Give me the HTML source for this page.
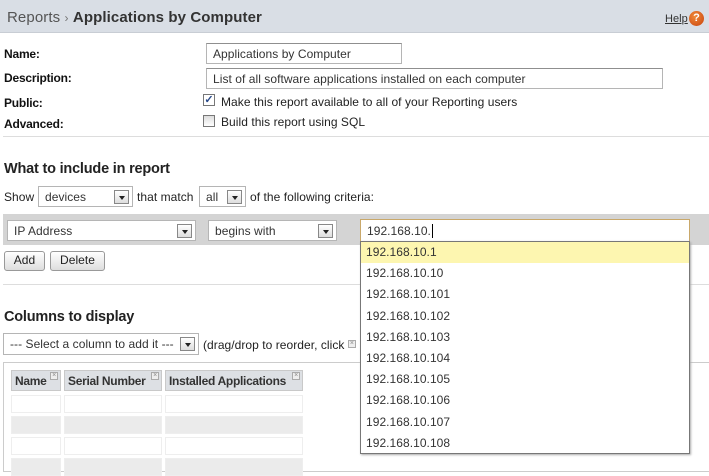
<!DOCTYPE html>
<html><head><meta charset="utf-8"><style>
*{margin:0;padding:0;box-sizing:border-box}
body{width:709px;height:462px;overflow:hidden;background:#fff;font-family:"Liberation Sans",sans-serif;font-size:12px;letter-spacing:0.05px;color:#222;position:relative}
.a{position:absolute;white-space:nowrap}
.hdr{left:0;top:0;width:709px;height:33px;background:#d9dee5;border-bottom:1px solid #c8cdd4}
.lbl{left:4px;font-weight:bold;color:#111;letter-spacing:-0.2px}
.inp{border:1px solid #b5b5b5;border-top-color:#8f8f8f;background:#fff;padding:3px 6px;color:#333;height:21px;line-height:14px}
.sel{border:1px solid #b5b5b5;background:#fff;padding:3px 6px;color:#333;height:21px;line-height:14px}
.arr{position:absolute;right:3px;top:3px;width:15px;height:14px;border:1px solid #888;background:linear-gradient(#fff,#ddd)}
.arr:after{content:"";position:absolute;left:4px;top:5px;border-left:3px solid transparent;border-right:3px solid transparent;border-top:4px solid #222}
.cb{width:12px;height:12px;border:1px solid #777;background:linear-gradient(#ddd,#fff)}
.h2{font-weight:bold;font-size:14.5px;color:#222;letter-spacing:-0.2px}
.btn{border:1px solid #999;border-radius:3px;background:linear-gradient(#fff,#ddd);height:20px;line-height:17px;text-align:center;color:#222}
.dd{left:360px;top:241px;width:330px;height:213px;border:1px solid #777;background:#fff;box-shadow:1px 1px 2px #aaa}
.dd div{height:21.2px;line-height:21px;padding-left:5px;color:#333}
.th{background:#dde0e4;border:1px solid #c9c9c9;height:21px;line-height:21px;font-weight:bold;padding-left:3px;color:#333;letter-spacing:-0.3px}
.x{position:absolute;right:2px;top:1px;width:8px;height:8px;border:1px solid #aaa;background:#eee;font-size:7px;line-height:6px;text-align:center;color:#888;font-weight:normal}
.td{border:1px solid #eee;height:18px}
.g{background:#ebebeb}
</style></head><body>
<div class="a hdr"></div>
<div class="a" style="left:7px;top:9px;font-size:15px;letter-spacing:0.1px"><span style="color:#555">Reports</span> <span style="color:#777;font-size:12px">›</span> <b style="color:#333">Applications by Computer</b></div>
<div class="a" style="left:665px;top:13px;font-size:11px;color:#333;text-decoration:underline">Help</div>
<div class="a" style="left:689px;top:11px;width:15px;height:15px;border-radius:50%;background:radial-gradient(circle at 40% 35%,#f08a3a,#c8420c);color:#fff;font-weight:bold;font-size:11px;text-align:center;line-height:15px">?</div>

<div class="a lbl" style="top:47px">Name:</div>
<div class="a inp" style="left:206px;top:43px;width:196px">Applications by Computer</div>
<div class="a lbl" style="top:71px">Description:</div>
<div class="a inp" style="left:206px;top:68px;width:457px">List of all software applications installed on each computer</div>
<div class="a lbl" style="top:96px">Public:</div>
<div class="a cb" style="left:203px;top:94px;background:#fff;color:#2a4a8a;font-size:11px;line-height:10px;text-align:center;font-weight:bold">✓</div>
<div class="a" style="left:221px;top:95px">Make this report available to all of your Reporting users</div>
<div class="a lbl" style="top:117px">Advanced:</div>
<div class="a cb" style="left:203px;top:115px"></div>
<div class="a" style="left:221px;top:115px">Build this report using SQL</div>
<div class="a" style="left:3px;top:136px;width:706px;height:1px;background:#ddd"></div>

<div class="a h2" style="left:4px;top:161px">What to include in report</div>
<div class="a" style="left:4px;top:190px">Show</div>
<div class="a sel" style="left:38px;top:186px;width:95px">devices<span class="arr"></span></div>
<div class="a" style="left:137px;top:190px">that match</div>
<div class="a sel" style="left:199px;top:186px;width:47px">all<span class="arr"></span></div>
<div class="a" style="left:250px;top:190px">of the following criteria:</div>

<div class="a" style="left:3px;top:214px;width:706px;height:31px;background:#d4d4d4"></div>
<div class="a sel" style="left:7px;top:220px;width:189px">IP Address<span class="arr"></span></div>
<div class="a sel" style="left:208px;top:220px;width:129px">begins with<span class="arr"></span></div>
<div class="a inp" style="left:360px;top:219px;width:330px;height:23px;border:1px solid #c9a86a;padding-top:4px">192.168.10.<span style="border-left:1px solid #000;margin-left:1px"></span></div>
<div class="a btn" style="left:4px;top:251px;width:41px">Add</div>
<div class="a btn" style="left:50px;top:251px;width:55px">Delete</div>
<div class="a" style="left:3px;top:284px;width:706px;height:1px;background:#ddd"></div>

<div class="a h2" style="left:4px;top:309px">Columns to display</div>
<div class="a sel" style="left:3px;top:333px;width:196px;height:22px">--- Select a column to add it ---<span class="arr"></span></div>
<div class="a" style="left:203px;top:338px">(drag/drop to reorder, click</div>
<div class="a x" style="left:348px;top:340px;right:auto">×</div>
<div class="a" style="left:3px;top:362px;width:710px;height:110px;border:1px solid #ccc"></div>
<div class="a th" style="left:11px;top:370px;width:50px">Name<span class="x">×</span></div>
<div class="a th" style="left:64px;top:370px;width:98px">Serial Number<span class="x">×</span></div>
<div class="a th" style="left:165px;top:370px;width:138px">Installed Applications<span class="x">×</span></div>
<div class="a td" style="left:11px;top:395px;width:50px"></div><div class="a td" style="left:64px;top:395px;width:98px"></div><div class="a td" style="left:165px;top:395px;width:138px"></div>
<div class="a td g" style="left:11px;top:416px;width:50px"></div><div class="a td g" style="left:64px;top:416px;width:98px"></div><div class="a td g" style="left:165px;top:416px;width:138px"></div>
<div class="a td" style="left:11px;top:437px;width:50px"></div><div class="a td" style="left:64px;top:437px;width:98px"></div><div class="a td" style="left:165px;top:437px;width:138px"></div>
<div class="a td g" style="left:11px;top:458px;width:50px"></div><div class="a td g" style="left:64px;top:458px;width:98px"></div><div class="a td g" style="left:165px;top:458px;width:138px"></div>

<div class="a dd">
<div style="background:#fdf6b0">192.168.10.1</div>
<div>192.168.10.10</div>
<div>192.168.10.101</div>
<div>192.168.10.102</div>
<div>192.168.10.103</div>
<div>192.168.10.104</div>
<div>192.168.10.105</div>
<div>192.168.10.106</div>
<div>192.168.10.107</div>
<div>192.168.10.108</div>
</div>
</body></html>
